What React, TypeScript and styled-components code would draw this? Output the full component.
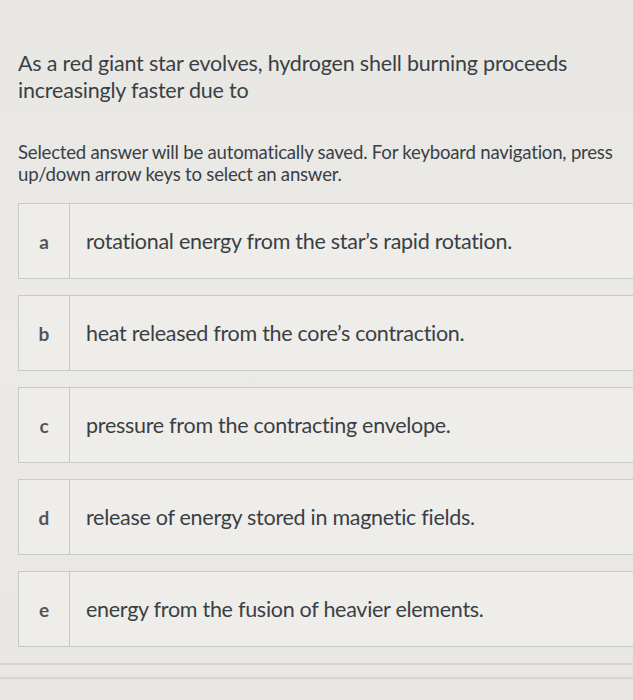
import React from "react";
import styled, { createGlobalStyle } from "styled-components";

const Global = createGlobalStyle`
  html, body { margin: 0; padding: 0; background: #e9e8e4; }
  body { font-family: Lato, "Open Sans", sans-serif; color: #3b4046; }
`;

const Page = styled.div`
  width: 633px;
  height: 700px;
  overflow: hidden;
  background: linear-gradient(180deg, #e8e7e3 0%, #ebeae6 50%, #e8e7e3 100%);
  padding: 50px 0 0 18px;
  box-sizing: border-box;
  display: flex;
  flex-direction: column;
`;

const Question = styled.h1`
  margin: 0;
  font-size: 21.5px;
  font-weight: 400;
  line-height: 27px;
  color: #3a3f45;
  letter-spacing: -0.2px;
`;

const Instructions = styled.p`
  margin: 37px 0 0;
  font-size: 18.6px;
  line-height: 22px;
  color: #3a3f45;
  letter-spacing: -0.22px;
`;

const Options = styled.div`
  margin-top: 18px;
  display: flex;
  flex-direction: column;
  gap: 16px;
  margin-right: -20px;
`;

const Option = styled.div`
  display: flex;
  height: 76px;
  box-sizing: border-box;
  border: 1.5px solid #c9c9c5;
  background: #eeede9;
`;

const Letter = styled.div`
  width: 50px;
  flex: none;
  display: flex;
  align-items: center;
  justify-content: center;
  border-right: 1.5px solid #c9c9c5;
  font-size: 19px;
  font-weight: 700;
  color: #50565c;
`;

const Text = styled.div`
  flex: 1;
  display: flex;
  align-items: center;
  padding-left: 16px;
  font-size: 21.5px;
  color: #3a3f45;
  letter-spacing: -0.28px;
`;

const Footer = styled.div`
  margin: 16px 0 0 -18px;
  height: 12px;
  border-top: 2px solid #d6d5d1;
  border-bottom: 2px solid #d6d5d1;
`;

const options = [
  ["a", "rotational energy from the star\u2019s rapid rotation."],
  ["b", "heat released from the core\u2019s contraction."],
  ["c", "pressure from the contracting envelope."],
  ["d", "release of energy stored in magnetic fields."],
  ["e", "energy from the fusion of heavier elements."],
];

export default function App() {
  return (
    <>
      <Global />
      <Page>
        <Question>
          As a red giant star evolves, hydrogen shell burning proceeds
          <br />
          increasingly faster due to
        </Question>
        <Instructions>
          Selected answer will be automatically saved. For keyboard navigation, press
          <br />
          up/down arrow keys to select an answer.
        </Instructions>
        <Options>
          {options.map(([l, t]) => (
            <Option key={l}>
              <Letter>{l}</Letter>
              <Text>{t}</Text>
            </Option>
          ))}
        </Options>
        <Footer />
      </Page>
    </>
  );
}
